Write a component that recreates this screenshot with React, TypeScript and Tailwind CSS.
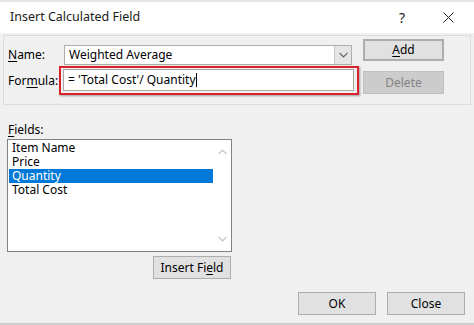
import React from "react";

const btn =
  "flex items-center justify-center bg-[#e1e1e1] border border-[#adadad] text-[12px] text-black";

function Chevron({ up, color = "#a6a6a6" }: { up?: boolean; color?: string }) {
  return (
    <svg width="9" height="6" viewBox="0 0 9 6">
      <path
        d={up ? "M0.5 5.2 L4.5 1.2 L8.5 5.2" : "M0.5 0.8 L4.5 4.8 L8.5 0.8"}
        fill="none"
        stroke={color}
        strokeWidth="1.2"
      />
    </svg>
  );
}

export default function App() {
  const fields = ["Item Name", "Price", "Quantity", "Total Cost"];
  const selected = "Quantity";

  return (
    <div className="w-[474px] h-[325px] flex flex-col bg-[#f0f0f0] font-['Segoe_UI','Noto_Sans',sans-serif] text-[12px] text-black overflow-hidden">
      {/* title bar */}
      <div className="h-[33px] shrink-0 bg-white border-t-2 border-[#e6e6e6] flex items-center">
        <span className="pl-[10px] text-[12.5px] text-[#1a1a1a]">Insert Calculated Field</span>
        <span className="ml-auto mr-[38px] text-[14px] text-[#222]">?</span>
        <svg width="11" height="11" viewBox="0 0 11 11" className="mr-[20px]">
          <path d="M0.5 0.5 L10.5 10.5 M10.5 0.5 L0.5 10.5" stroke="#222" strokeWidth="1" />
        </svg>
      </div>

      <div className="flex-1 flex flex-col border-b-2 border-[#cfcfcf]">
        {/* name / formula group */}
        <div className="mt-[2px] ml-[3px] w-[468px] h-[70px] shrink-0 border border-[#dcdcdc] flex">
          <div className="w-[355px] flex flex-col">
            <div className="mt-[9px] h-[20px] flex items-center">
              <span className="w-[55px] pl-[4px]">
                <u className="underline-offset-[2px]">N</u>ame:
              </span>
              <div className="ml-[5px] w-[288px] h-[20px] bg-white border border-[#adadad] flex items-center">
                <span className="pl-[4px] flex-1">Weighted Average</span>
                <div className="w-[17px] h-[18px] bg-[#e5e5e5] border-l border-[#c6c6c6] flex items-center justify-center">
                  <Chevron color="#606060" />
                </div>
              </div>
            </div>
            <div className="mt-[1px] h-[29px] flex items-center">
              <span className="w-[55px] pl-[4px]">
                For<u className="underline-offset-[2px]">m</u>ula:
              </span>
              <div className="w-[300px] h-[29px] border-2 border-[#d9232b] shadow-[1px_1px_2px_rgba(0,0,0,0.35)] pl-[2px] pr-[3px] pt-[1px] pb-[2px]">
                <div className="w-full h-full bg-white border border-[#a8a8a8] flex items-center pl-[4px]">
                  <span>= 'Total Cost'/ Quantity</span>
                  <span className="w-[1px] h-[14px] bg-black" />
                </div>
              </div>
            </div>
          </div>
          <div className="ml-[4px] pt-[3px] flex flex-col">
            <div className={`${btn} w-[81px] h-[22px] border-2 border-[#0078d7]`}>
              <span>
                <u className="underline-offset-[2px]">A</u>dd
              </span>
            </div>
            <div className="mt-[10px] w-[81px] h-[23px] flex items-center justify-center bg-[#cccccc] border border-[#bfbfbf] text-[#838383]">
              Delete
            </div>
          </div>
        </div>

        {/* fields */}
        <div className="mt-[18px] h-[14px] leading-[14px] pl-[8px]">
          <u className="underline-offset-[2px]">F</u>ields:
        </div>
        <div className="mt-[2px] ml-[7px] w-[225px] h-[113px] bg-white border border-[#828282] flex">
          <div className="flex-1 p-[1px] flex flex-col">
            {fields.map((f) => (
              <div
                key={f}
                className={
                  f === selected
                    ? "h-[14px] leading-[14px] pl-[3px] bg-[#0078d7] text-white"
                    : "h-[14px] leading-[14px] pl-[3px]"
                }
              >
                {f}
              </div>
            ))}
          </div>
          <div className="w-[17px] flex flex-col items-center justify-between py-[9px]">
            <Chevron up color="#c2c2c2" />
            <Chevron color="#c2c2c2" />
          </div>
        </div>
        <div className={`${btn} mt-[4px] ml-[153px] w-[78px] h-[23px]`}>
          <span>
            Insert Fi<u className="underline-offset-[2px]">e</u>ld
          </span>
        </div>

        {/* ok / close */}
        <div className="mt-[13px] flex justify-end pr-[9px] gap-[11px]">
          <div className={`${btn} w-[78px] h-[23px]`}>OK</div>
          <div className={`${btn} w-[78px] h-[23px]`}>Close</div>
        </div>
      </div>
    </div>
  );
}
